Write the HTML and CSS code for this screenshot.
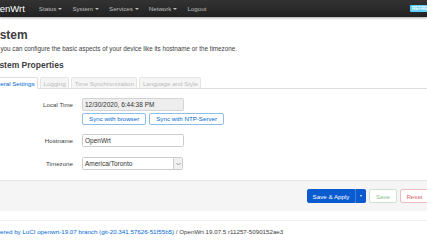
FILE: index.html
```html
<!DOCTYPE html>
<html lang="en">
<head>
<meta charset="utf-8">
<title>System - OpenWrt</title>
<link rel="stylesheet" href="styles.css">
</head>
<body>
<header class="topbar">
  <div class="topbar-inner">
    <div class="topbar-left">
      <a class="brand">OpenWrt</a>
      <ul class="nav">
        <li><a class="dropdown">Status</a></li>
        <li><a class="dropdown">System</a></li>
        <li><a class="dropdown">Services</a></li>
        <li><a class="dropdown">Network</a></li>
        <li><a>Logout</a></li>
      </ul>
    </div>
    <div class="indicators"><span class="label notice">Refreshing</span></div>
  </div>
</header>
<main class="container">
  <h2 class="page-title">System</h2>
  <p class="desc">Here you can configure the basic aspects of your device like its hostname or the timezone.</p>
  <h3 class="section-title">System Properties</h3>
  <ul class="tabs">
    <li class="tab active"><a>General Settings</a></li>
    <li class="tab"><a>Logging</a></li>
    <li class="tab"><a>Time Synchronization</a></li>
    <li class="tab"><a>Language and Style</a></li>
  </ul>
  <div class="form">
    <div class="row">
      <label class="row-label">Local Time</label>
      <div class="field">
        <div class="input readonly">12/30/2020, 6:44:38 PM</div>
        <div class="btn-row">
          <button class="btn action">Sync with browser</button>
          <button class="btn action">Sync with NTP-Server</button>
        </div>
      </div>
    </div>
    <div class="row row-host">
      <label class="row-label">Hostname</label>
      <div class="field"><div class="input">OpenWrt</div></div>
    </div>
    <div class="row">
      <label class="row-label">Timezone</label>
      <div class="field">
        <div class="select"><span class="select-text">America/Toronto</span><span class="select-arrow"><svg width="5" height="4" viewBox="0 0 5 4"><path d="M0.5 1 L2.5 3 L4.5 1" fill="none" stroke="#888" stroke-width="0.8"/></svg></span></div>
      </div>
    </div>
  </div>
  <div class="page-actions">
    <div class="split">
      <button class="btn apply">Save &amp; Apply</button><button class="btn apply caret-btn"><span class="tri"></span></button>
    </div>
    <button class="btn save">Save</button>
    <button class="btn reset">Reset</button>
  </div>
  <footer class="footer">
    <a>Powered by LuCI openwrt-19.07 branch (git-20.341.57626-51f55b5)</a> / OpenWrt 19.07.5 r11257-5090152ae3
  </footer>
</main>
</body>
</html>
```
FILE: styles.css
```css
html, body {
  margin: 0;
  padding: 0;
  overflow: hidden;
  background: #fff;
}
body {
  font-family: "Liberation Sans", Arial, sans-serif;
  font-size: 6.2px;
  line-height: 9px;
  color: #404040;
}
ul { list-style: none; margin: 0; padding: 0; }
a { text-decoration: none; }

/* top bar */
.topbar {
  height: 17px;
  background: linear-gradient(#333, #222);
  box-shadow: 0 1px 2px rgba(0,0,0,0.35);
}
.topbar-inner {
  margin-left: -15px;
  width: 455px;
  height: 17px;
  display: flex;
  align-items: center;
  justify-content: space-between;
}
.topbar-left { display: flex; align-items: center; }
.brand {
  color: #fff;
  font-size: 9.5px;
  line-height: 17px;
  padding: 0 9px 0 2px;
}
.nav { display: flex; }
.nav a {
  display: flex;
  align-items: center;
  gap: 2px;
  color: #bfbfbf;
  padding: 0 5px;
  line-height: 17px;
}
.nav a.dropdown::after {
  content: "";
  width: 0;
  height: 0;
  border-top: 2px solid #bfbfbf;
  border-left: 2px solid transparent;
  border-right: 2px solid transparent;
  margin-top: 1px;
}
.indicators { width: 30px; white-space: nowrap; display: flex; }
.label.notice {
  background: #62cffc;
  color: #fff;
  font-size: 4.5px;
  font-weight: bold;
  text-transform: uppercase;
  line-height: 7px;
  padding: 0 2px;
  border-radius: 1px;
}

/* main */
.container {
  margin-left: -15px;
  width: 448px;
}
.page-title {
  font-size: 12px;
  line-height: 14px;
  font-weight: bold;
  color: #404040;
  margin: 11px 0 0;
}
.desc { margin: 2px 0 0; font-size: 6.3px; }
.section-title {
  font-size: 8.5px;
  line-height: 11px;
  font-weight: bold;
  margin: 7px 0 0 4px;
  color: #404040;
}
.tabs {
  display: flex;
  margin-top: 6px;
  border-bottom: 1px solid #ddd;
}
.tab {
  margin-right: 2px;
  margin-bottom: -1px;
}
.tab a {
  display: block;
  padding: 1px 2.5px 0;
  line-height: 9px;
  border: 1px solid #e4e4e4;
  border-bottom-color: #ddd;
  border-radius: 2px 2px 0 0;
  background: #f5f5f5;
  color: #bbb;
}
.tab.active a {
  background: #fff;
  color: #0069d6;
  border-color: #ddd;
  border-bottom-color: #fff;
}

/* form */
.form { margin-top: 9px; }
.row { display: flex; margin-bottom: 9px; }
.row-host { margin-bottom: 10px; }
.row-label {
  width: 88px;
  text-align: right;
  line-height: 13px;
  flex: none;
}
.field { margin-left: 9px; }
.input {
  box-sizing: border-box;
  width: 102px;
  height: 13px;
  line-height: 11px;
  padding: 0 2px;
  border: 1px solid #ccc;
  border-radius: 1.5px;
  color: #333;
  background: #fff;
  font-size: 6.5px;
}
.input.readonly { background: #eee; border-color: #d4d4d4; }
.btn-row { display: flex; gap: 3px; margin-top: 2px; }
.btn {
  font-family: inherit;
  font-size: 6.2px;
  box-sizing: border-box;
  margin: 0;
  cursor: pointer;
  border-radius: 2px;
  background: #fff;
}
.btn.action {
  height: 12px;
  padding: 0 6px;
  line-height: 10px;
  border: 1px solid #8fbdea;
  color: #0069d6;
}
.select {
  box-sizing: border-box;
  width: 101px;
  height: 13px;
  border: 1px solid #ccc;
  border-radius: 1.5px;
  display: flex;
  align-items: stretch;
  color: #333;
  font-size: 6.5px;
}
.select-text { flex: 1; padding-left: 2px; line-height: 11px; }
.select-arrow {
  width: 8px;
  border-left: 1px solid #ccc;
  background: #f0f0f0;
  display: flex;
  align-items: center;
  justify-content: center;
}

/* actions */
.page-actions {
  margin-top: 10px;
  border-top: 1px solid #e5e5e5;
  background: #f5f5f5;
  padding: 8px 4px 8px 0;
  display: flex;
  justify-content: flex-end;
  gap: 3px;
}
.split { display: flex; }
.btn.apply {
  height: 14px;
  border: 1px solid #0a5ad0;
  background: #0a5ad0;
  color: #fff;
  padding: 0 4px;
  width: 48px;
  border-radius: 2px 0 0 2px;
}
.btn.apply.caret-btn {
  width: 11px;
  padding: 0;
  border-left: 1px solid #3a7fe0;
  border-radius: 0 2px 2px 0;
  display: flex;
  align-items: center;
  justify-content: center;
}
.tri {
  width: 0;
  height: 0;
  border-top: 2px solid #fff;
  border-left: 1.5px solid transparent;
  border-right: 1.5px solid transparent;
}
.btn.save {
  height: 14px;
  width: 28px;
  padding: 0;
  border: 1px solid #cfe2cf;
  color: #8fbf8f;
}
.btn.reset {
  height: 14px;
  width: 29px;
  padding: 0;
  border: 1px solid #ebbcc0;
  color: #d9686c;
}

.footer {
  margin: 9px 0 0 3px;
  border-top: 1px solid #f3f3f3;
  padding-top: 6px;
  font-size: 6.2px;
}
.footer a { color: #0069d6; }
```
